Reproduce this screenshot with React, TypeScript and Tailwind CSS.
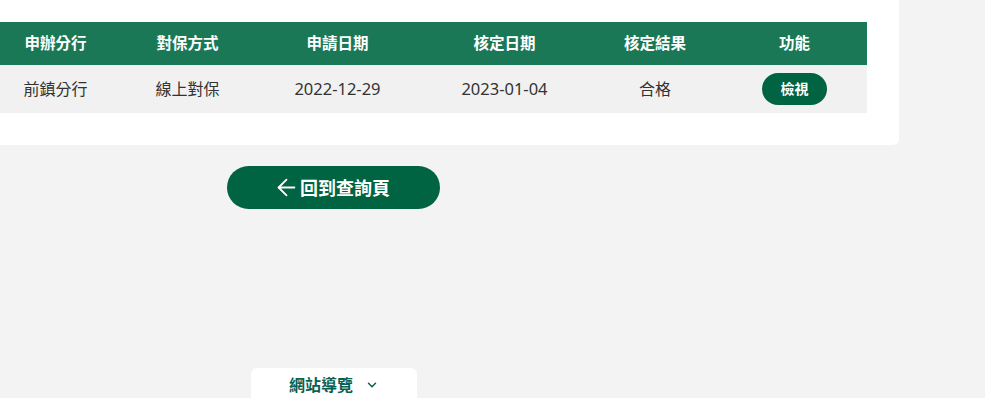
import React from 'react';
import { ArrowLeft, ChevronDown } from 'lucide-react';

const columns = ['申辦分行', '對保方式', '申請日期', '核定日期', '核定結果', '功能'];

const rows = [
  { branch: '前鎮分行', method: '線上對保', applyDate: '2022-12-29', approveDate: '2023-01-04', result: '合格' },
];

const App = () => {
  return (
    <div
      className="min-h-[398px] w-full overflow-hidden bg-[#f3f3f3]"
      style={{ fontFamily: '"Noto Sans", "Noto Sans CJK TC", sans-serif' }}
    >
      {/* Result card */}
      <div className="-ml-[42px] w-[941px] rounded-b-md bg-white pt-[22px] pr-8 pb-8 pl-8">
        <div className="grid grid-cols-[131px_133px_167px_167px_134px_145px]">
          {columns.map((col) => (
            <div
              key={col}
              className="flex h-[43px] items-center justify-center bg-[#1b7856] text-[15.5px] font-bold text-white"
            >
              {col}
            </div>
          ))}
          {rows.map((row) => (
            <React.Fragment key={row.applyDate}>
              <div className="flex h-12 items-center justify-center bg-[#f1f1f1] text-base text-[#333]">{row.branch}</div>
              <div className="flex h-12 items-center justify-center bg-[#f1f1f1] text-base text-[#333]">{row.method}</div>
              <div className="flex h-12 items-center justify-center bg-[#f1f1f1] text-[16.5px] text-[#333]">{row.applyDate}</div>
              <div className="flex h-12 items-center justify-center bg-[#f1f1f1] text-[16.5px] text-[#333]">{row.approveDate}</div>
              <div className="flex h-12 items-center justify-center bg-[#f1f1f1] text-base text-[#333]">{row.result}</div>
              <div className="flex h-12 items-center justify-center bg-[#f1f1f1]">
                <button className="flex h-8 w-[65px] items-center justify-center rounded-full bg-[#006341] text-sm font-bold text-white">
                  檢視
                </button>
              </div>
            </React.Fragment>
          ))}
        </div>
      </div>

      {/* Back button */}
      <div className="ml-[227px] mt-[21px]">
        <button className="flex h-[43px] w-[213px] items-center justify-center rounded-full bg-[#006341] pr-1 text-lg font-bold text-white">
          <ArrowLeft size={27} strokeWidth={1.6} />
          回到查詢頁
        </button>
      </div>

      {/* Site map toggle */}
      <div className="ml-[251px] mt-[159px] flex h-[30px] w-[166px] items-center justify-center gap-3 rounded-t-md bg-white pt-1">
        <span className="text-base font-bold text-[#0b5e50]">網站導覽</span>
        <ChevronDown size={14} strokeWidth={2.5} className="text-[#0b5e50]" />
      </div>
    </div>
  );
};

export default App;
